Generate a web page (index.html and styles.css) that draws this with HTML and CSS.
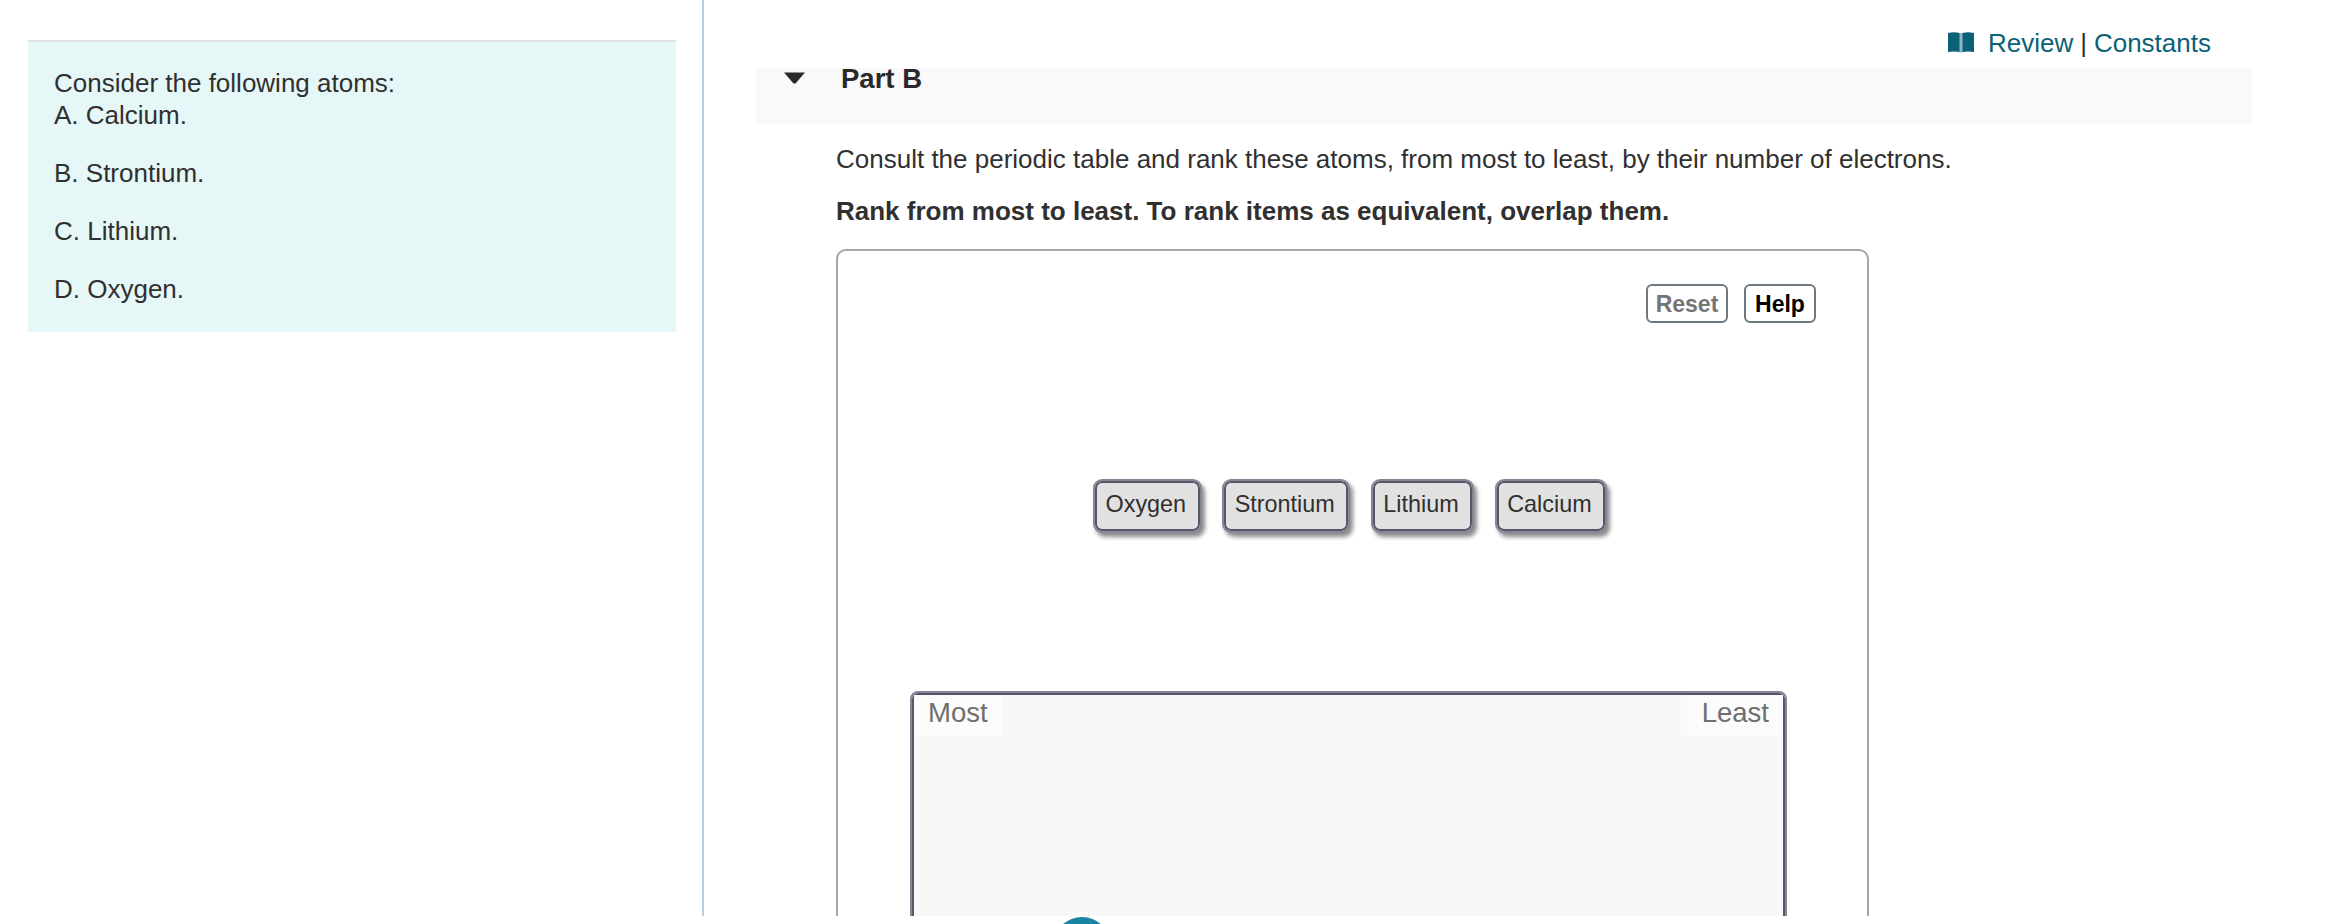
FILE: index.html
```html
<!DOCTYPE html>
<html lang="en">
<head>
<meta charset="utf-8">
<title>Part B</title>
<link rel="stylesheet" href="styles.css">
</head>
<body>
<div class="app">
  <aside class="side">
    <div class="intro">
      <p>Consider the following atoms:<br>A. Calcium.</p>
      <p>B. Strontium.</p>
      <p>C. Lithium.</p>
      <p>D. Oxygen.</p>
    </div>
  </aside>
  <main class="main">
    <div class="links">
      <svg class="book" viewBox="0 0 26 21" aria-hidden="true">
        <path class="book-gutter" d="M11 1 H15 V20.5 H11 Z"/>
        <path d="M0 1 C4 0 8 0 11.5 1 V20 C8 19.2 4 19.2 0 20 Z M14.5 1 C18 0 22 0 26 1 V20 C22 19.2 18 19.2 14.5 20 Z"/>
      </svg>
      <a class="link">Review</a><span class="sep">|</span><a class="link">Constants</a>
    </div>
    <div class="part">
      <svg class="caret" viewBox="0 0 21 12" aria-hidden="true"><path d="M0 0.5 H21 L11.5 11.5 H9.5 Z"/></svg>
      <h2 class="part-title">Part B</h2>
    </div>
    <div class="content">
      <p class="prompt">Consult the periodic table and rank these atoms, from most to least, by their number of electrons.</p>
      <p class="instr">Rank from most to least. To rank items as equivalent, overlap them.</p>
      <section class="work">
        <div class="tools">
          <button class="btn btn-off">Reset</button>
          <button class="btn">Help</button>
        </div>
        <div class="tiles">
          <div class="tile">Oxygen</div>
          <div class="tile">Strontium</div>
          <div class="tile">Lithium</div>
          <div class="tile">Calcium</div>
        </div>
        <div class="zone">
          <span class="end end-most">Most</span>
          <span class="end">Least</span>
        </div>
      </section>
    </div>
  </main>
</div>
<div class="fab-clip"><div class="fab"></div></div>
</body>
</html>
```

FILE: styles.css
```css
* { box-sizing: border-box; }
html, body { margin: 0; height: 924px; overflow: hidden; background: #fff; }
body { font-family: "Liberation Sans", Arial, sans-serif; color: #303030; position: relative; }
p { margin: 0; }

.app { display: flex; height: 916px; overflow: hidden; }

.side { width: 704px; flex: none; border-right: 2px solid #b9cce0; padding: 40px 26px 0 28px; }
.intro { height: 292px; background: #e6f7f7; border-top: 2px solid #e0e0e0; padding: 25px 26px 0; font-size: 26px; line-height: 32px; }
.intro p { margin-bottom: 26px; }

.main { flex: 1; min-width: 0; }

.links { height: 68px; display: flex; align-items: flex-start; padding: 27px 119px 0 0; justify-content: flex-end; font-size: 26px; line-height: 32px; }
.book { width: 26px; height: 21px; fill: #0b6178; margin: 5px 14px 0 0; }
.book-gutter { fill: #8fb8c4; }
.link { color: #0b6178; }
.sep { margin: 0 7px; color: #303030; }

.part { margin-left: 52px; width: 1496px; height: 56px; background: #f9f9f9; display: flex; align-items: flex-start; }
.caret { width: 21px; height: 12px; fill: #2a2a2a; margin: 4px 0 0 28px; }
.part-title { margin: 0 0 0 36px; font-size: 27.5px; line-height: 22px; font-weight: 700; color: #2a2a2a; }

.content { padding: 19px 0 0 132px; }
.prompt { font-size: 26px; line-height: 32px; }
.instr { font-size: 26px; line-height: 32px; font-weight: 700; margin-top: 20px; }

.work { width: 1033px; height: 680px; margin-top: 22px; border: 2px solid #a6a6a6; border-radius: 10px 10px 0 0; padding: 33px 0 0 0; }
.tools { display: flex; justify-content: flex-end; gap: 16px; padding-right: 51px; }
.btn { height: 39px; padding: 1px 0 0; border: 2px solid #6d7a80; border-radius: 6px; background: #fff; font: 700 23px/34px "Liberation Sans", Arial, sans-serif; color: #000; width: 72px; }
.btn-off { color: #757575; width: 82px; }

.tiles { display: flex; gap: 20.5px; margin: 156px 0 0 255px; }
.tile { height: 54px; padding: 0 13.5px 0 10.5px; border: 2px solid #868696; border-radius: 9px; background: #e1e1e1; box-shadow: inset 0 0 0 2px #565668, 3px 4px 4px #8c8c8c; font-size: 23.4px; line-height: 46px; color: #303030; }

.zone { margin: 158px 0 0 72px; width: 877px; height: 240px; border: 2px solid #868696; border-radius: 8px 8px 0 0; box-shadow: inset 0 0 0 2px #565668; background: #f8f8f8; display: flex; justify-content: space-between; padding: 2px; }
.end { background: #fbfbfb; color: #6f6f6f; font-size: 27.5px; line-height: 36px; height: 41px; padding: 0 14px 0 15px; }
.end-most { padding-left: 14px; }

.fab-clip { position: absolute; left: 1053px; top: 917px; width: 58px; height: 7px; overflow: hidden; }
.fab { width: 58px; height: 58px; border-radius: 50%; background: #1a84a5; }
```
